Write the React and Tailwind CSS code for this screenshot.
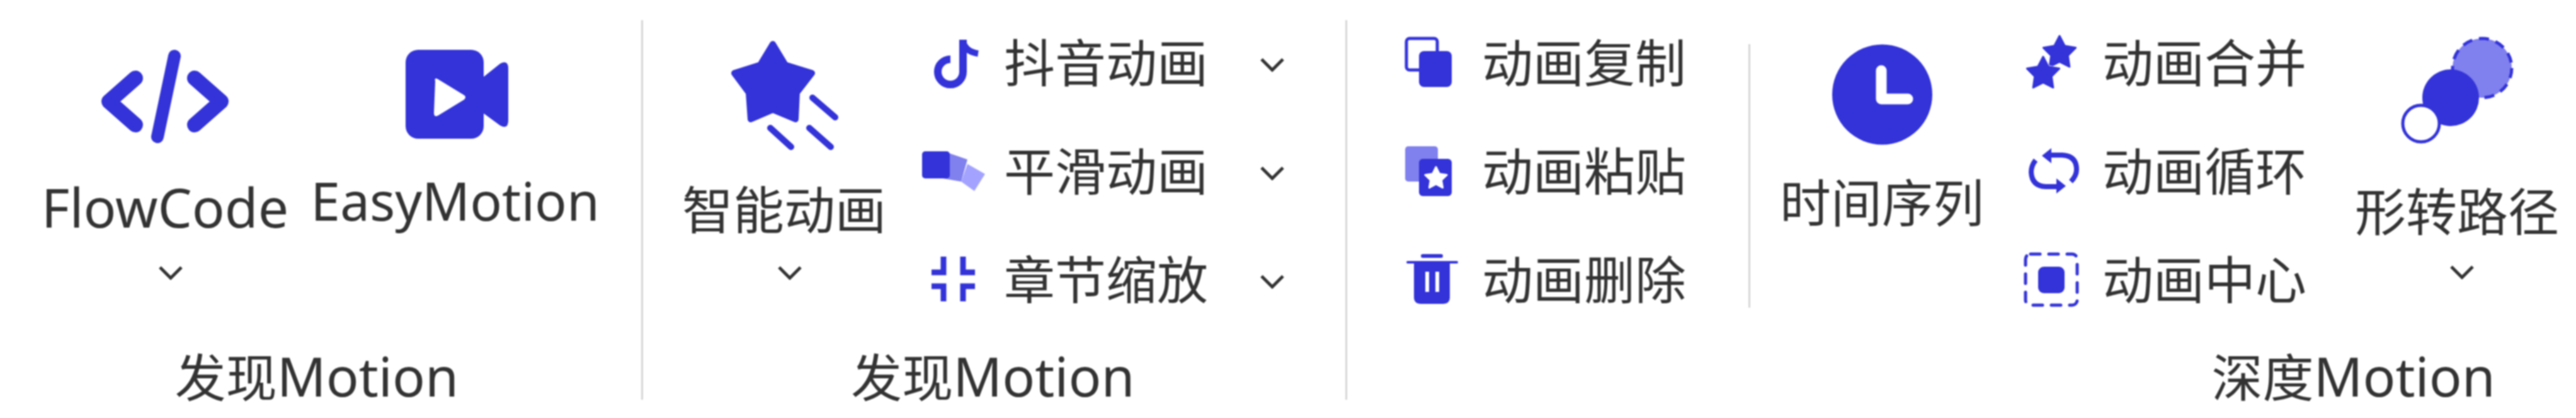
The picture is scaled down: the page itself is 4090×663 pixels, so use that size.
import React from 'react';

const BLUE = '#3333d9';
const MID = '#8080ee';
const PALE = '#a3a3ff';

// five point star as polygon points
function starPoints(cx, cy, R, r) {
  const pts = [];
  for (let i = 0; i < 10; i++) {
    const a = (Math.PI / 5) * i - Math.PI / 2;
    const d = i % 2 === 0 ? R : r;
    pts.push(`${cx + Math.cos(a) * d},${cy + Math.sin(a) * d}`);
  }
  return pts.join(' ');
}

function Chevron({ className = '' }) {
  return (
    <svg className={`block w-[40px] h-[23px] ${className}`} viewBox="0 0 40 23" fill="none" stroke="#333" strokeWidth="5">
      <polyline points="3,3 20,20 37,3" />
    </svg>
  );
}

function CodeIcon() {
  return (
    <svg className="block w-[206px] h-[150px]" viewBox="0 0 206 150" fill="none" stroke={BLUE} strokeLinecap="round" strokeLinejoin="round">
      <polyline points="56,46 14,83 56,120" strokeWidth="24" />
      <polyline points="150,46 192,83 150,120" strokeWidth="24" />
      <line x1="118" y1="11" x2="91" y2="139" strokeWidth="20" />
    </svg>
  );
}

function VideoIcon() {
  return (
    <svg className="block w-[163px] h-[141px] ml-[5px]" viewBox="0 0 163 141">
      <rect x="0" y="0" width="124" height="141" rx="20" fill={BLUE} />
      <path d="M120 46 L150 22 Q163 15 163 30 V112 Q163 127 150 120 L120 98 Z" fill={BLUE} />
      <path d="M47 50 Q45 43 52 47 L93 72 Q97 75 93 79 L52 104 Q45 108 45 100 Z" fill="#fff" />
    </svg>
  );
}

function ShootingStar() {
  return (
    <svg className="block w-[180px] h-[180px] ml-[10px]" viewBox="40 20 180 180" fill={BLUE} stroke={BLUE} strokeLinecap="round" strokeLinejoin="round">
      <polygon points="107,30 127,63 169,76 145,107 143,149 107,134 72,149 69,107 46,76 87,63" strokeWidth="10" />
      <line x1="170" y1="115" x2="206" y2="146" strokeWidth="10" />
      <line x1="103" y1="163" x2="136" y2="193" strokeWidth="10" />
      <line x1="165" y1="163" x2="199" y2="193" strokeWidth="10" />
    </svg>
  );
}

function IconBox({ viewBox, children }) {
  return (
    <svg className="block w-[100px] h-[100px] shrink-0" viewBox={viewBox}>
      {children}
    </svg>
  );
}

const tiktok = (
  <IconBox viewBox="43 1 100 100">
    <g fill="none" stroke={BLUE} strokeWidth="12">
      <path d="M108 15 V66 A20 20 0 1 1 88 46" />
      <path d="M108 18 Q112 34 132 37" strokeWidth="10" />
    </g>
  </IconBox>
);

const smooth = (
  <IconBox viewBox="45 173 100 100">
    <polygon points="88,195 117,205 107,240 78,235" fill={MID} />
    <polygon points="117,212 145,228 128,255 107,240" fill={PALE} />
    <rect x="45" y="192" width="44" height="43" rx="5" fill={BLUE} />
  </IconBox>
);

const compress = (
  <IconBox viewBox="43 346 100 100">
    <path d="M77 360 V385 H58 M108 360 V385 H127 M58 407 H77 V431 M127 407 H108 V431" fill="none" stroke={BLUE} strokeWidth="9" />
  </IconBox>
);

const copy = (
  <IconBox viewBox="19 10 100 100">
    <rect x="33" y="22" width="49" height="50" rx="5" fill="none" stroke={BLUE} strokeWidth="5" />
    <rect x="53" y="42" width="52" height="57" rx="8" fill={BLUE} />
  </IconBox>
);

const paste = (
  <IconBox viewBox="19 181 100 100">
    <rect x="31" y="192" width="52" height="56" rx="5" fill={MID} />
    <rect x="53" y="212" width="52" height="59" rx="6" fill={BLUE} />
    <polygon points={starPoints(80, 243, 18, 9)} fill="#fff" stroke="#fff" strokeWidth="3" strokeLinejoin="round" />
  </IconBox>
);

const trash = (
  <IconBox viewBox="19 358 100 100">
    <line x1="59" y1="371" x2="88" y2="371" stroke={BLUE} strokeWidth="6" strokeLinecap="round" />
    <line x1="35" y1="381" x2="113" y2="381" stroke={BLUE} strokeWidth="4" strokeLinecap="round" />
    <path d="M45 381 H102 V436 Q102 447 91 447 H56 Q45 447 45 436 Z" fill={BLUE} />
    <rect x="63" y="396" width="6" height="32" fill="#fff" />
    <rect x="79" y="396" width="6" height="32" fill="#fff" />
  </IconBox>
);

const merge = (
  <IconBox viewBox="18 11 100 100">
    <polygon points={starPoints(80, 46, 27, 14)} fill={BLUE} stroke={BLUE} strokeWidth="3" strokeLinejoin="round" />
    <polygon points={starPoints(54, 79, 28, 15)} fill="#fff" stroke="#fff" strokeWidth="3" />
    <polygon points={starPoints(54, 79, 27, 14)} fill={BLUE} stroke={BLUE} strokeWidth="3" strokeLinejoin="round" />
  </IconBox>
);

const loop = (
  <IconBox viewBox="18 180 100 100">
    <g fill="none" stroke={BLUE} strokeWidth="8">
      <path d="M64 205 H84 Q107 206 107 228 Q107 238 98 247" />
      <path d="M42 213 Q35 222 35 232 Q36 254 58 255 H78" />
    </g>
    <polygon points="52,206 67,194 67,218" fill={BLUE} />
    <polygon points="90,254 75,242 75,266" fill={BLUE} />
  </IconBox>
);

const center = (
  <IconBox viewBox="18 355 100 100">
    <rect x="26" y="365" width="82" height="81" rx="8" fill="none" stroke={BLUE} strokeWidth="5" strokeDasharray="15 14" strokeLinecap="round" />
    <rect x="46" y="385" width="42" height="42" rx="9" fill={BLUE} />
  </IconBox>
);

function ClockIcon() {
  return (
    <svg className="block w-[159px] h-[160px]" viewBox="0 0 159 160">
      <circle cx="79.5" cy="80" r="79.5" fill={BLUE} />
      <path d="M78 42 V87 H120" fill="none" stroke="#fff" strokeWidth="17" strokeLinecap="round" strokeLinejoin="round" />
    </svg>
  );
}

function MorphIcon() {
  return (
    <svg className="block w-[180px] h-[180px]" viewBox="35 25 180 180">
      <circle cx="165" cy="78" r="47" fill={MID} stroke={BLUE} strokeWidth="5" strokeDasharray="16 11" />
      <circle cx="115" cy="125" r="45" fill={BLUE} />
      <circle cx="68" cy="166" r="29" fill="#fff" stroke={BLUE} strokeWidth="5" />
    </svg>
  );
}

function Row({ icon, text, gap, chevron }) {
  return (
    <div className="flex items-center h-[80px]">
      {icon}
      <span className={`w-[322px] leading-[80px] whitespace-nowrap ${gap}`}>{text}</span>
      {chevron && <Chevron className="ml-[84px] mt-[6px]" />}
    </div>
  );
}

function Group({ className, labelClass, prefix, children }) {
  return (
    <div className={`flex flex-col justify-between h-[663px] pb-[25px] ${className}`}>
      <div className="flex items-start">{children}</div>
      <div className={`leading-[80px] whitespace-nowrap ${labelClass}`}>
        {prefix}<span className="text-[86px]">Motion</span>
      </div>
    </div>
  );
}

function Divider() {
  return <div className="w-[3px] h-[602px] mt-[32px] shrink-0 bg-[#d6d6d6]" />;
}

export default function App() {
  return (
    <div className="flex w-[4090px] h-[663px] overflow-hidden bg-white text-[#333] text-[81px] blur-[1px] font-['Noto_Sans','Noto_Sans_CJK_SC',sans-serif]">
      <Group className="w-[1018px]" labelClass="self-center pr-[12px]" prefix="发现">
        <div className="flex flex-col items-center w-[382px] ml-[71px] mt-[78px]">
          <CodeIcon />
          <div className="mt-[60px] leading-[80px] text-[86px] whitespace-nowrap">FlowCode</div>
          <Chevron className="mt-[53px] ml-[18px]" />
        </div>
        <div className="flex flex-col items-center w-[447px] ml-[46px] mt-[79px]">
          <VideoIcon />
          <div className="mt-[58px] leading-[80px] text-[84px] whitespace-nowrap">EasyMotion</div>
        </div>
      </Group>
      <Divider />

      <Group className="w-[1115px]" labelClass="self-center pr-[4px]" prefix="发现">
        <div className="flex flex-col items-center w-[322px] ml-[63px] mt-[60px]">
          <ShootingStar />
          <div className="mt-[52px] leading-[80px] whitespace-nowrap">智能动画</div>
          <Chevron className="mt-[49px] ml-[18px]" />
        </div>
        <div className="flex flex-col gap-[92px] ml-[58px] mt-[59px]">
          <Row icon={tiktok} text="抖音动画" gap="ml-[30px]" chevron />
          <Row icon={smooth} text="平滑动画" gap="ml-[30px]" chevron />
          <Row icon={compress} text="章节缩放" gap="ml-[30px]" chevron />
        </div>
      </Group>
      <Divider />

      <Group className="flex-1" labelClass="self-end pr-[128px]" prefix="深度">
        <div className="flex flex-col gap-[92px] ml-[80px] mt-[59px]">
          <Row icon={copy} text="动画复制" gap="ml-[34px]" />
          <Row icon={paste} text="动画粘贴" gap="ml-[34px]" />
          <Row icon={trash} text="动画删除" gap="ml-[34px]" />
        </div>
        <div className="w-[3px] h-[418px] mt-[70px] ml-[101px] shrink-0 bg-[#d6d6d6]" />
        <div className="flex flex-col items-center w-[322px] ml-[48px] mt-[70px]">
          <ClockIcon />
          <div className="mt-[51px] leading-[80px] whitespace-nowrap">时间序列</div>
        </div>
        <div className="flex flex-col gap-[92px] ml-[59px] mt-[59px]">
          <Row icon={merge} text="动画合并" gap="ml-[30px]" />
          <Row icon={loop} text="动画循环" gap="ml-[30px]" />
          <Row icon={center} text="动画中心" gap="ml-[30px]" />
        </div>
        <div className="flex flex-col items-center w-[322px] ml-[80px] mt-[55px]">
          <MorphIcon />
          <div className="mt-[60px] leading-[80px] whitespace-nowrap">形转路径</div>
          <Chevron className="mt-[45px] ml-[16px]" />
        </div>
      </Group>
    </div>
  );
}
